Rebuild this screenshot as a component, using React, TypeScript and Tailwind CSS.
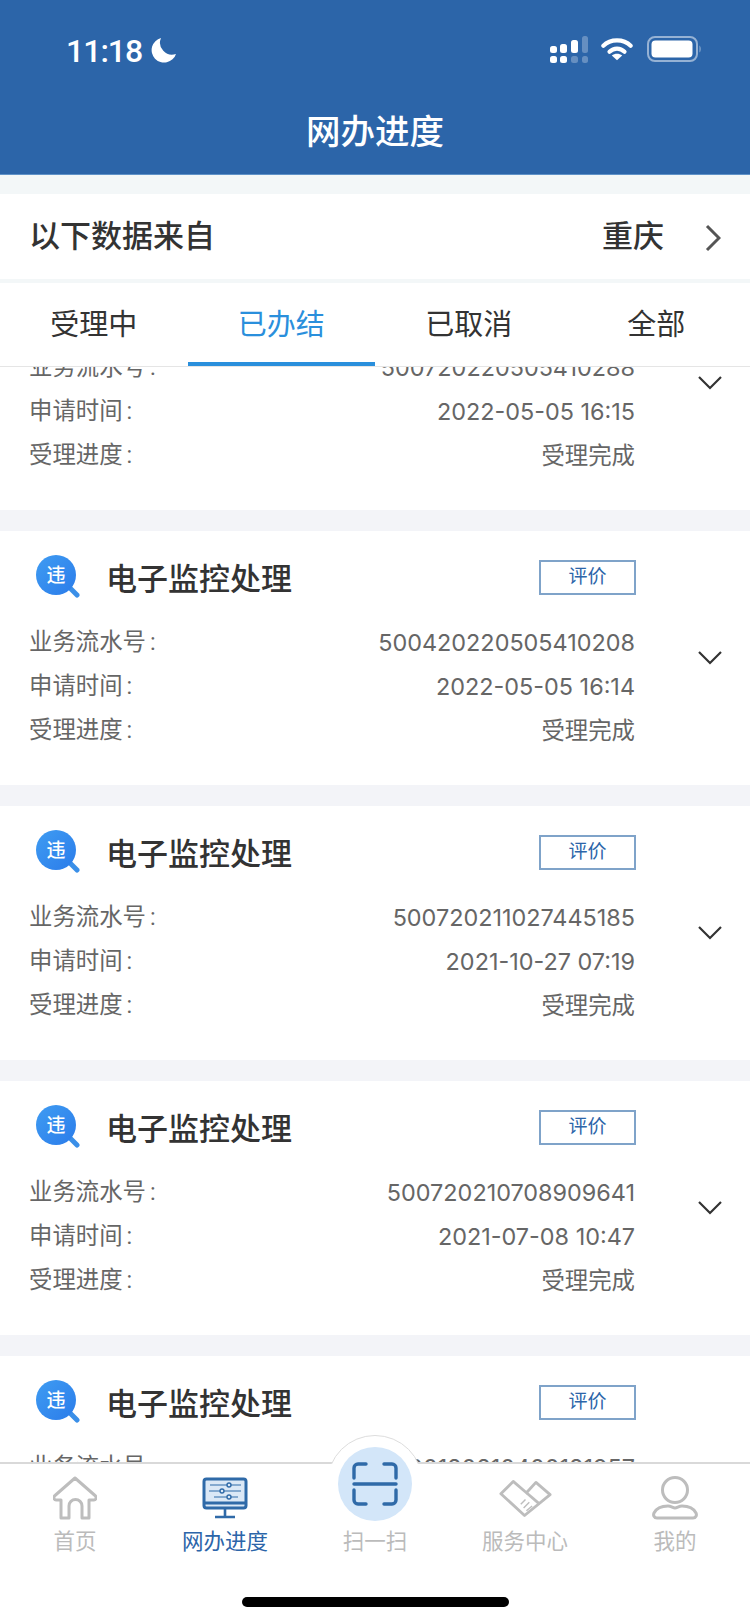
const cjk = "font-['Roboto','Noto_Sans_CJK_SC',sans-serif]";

const tabs = ['受理中', '已办结', '已取消', '全部'];

const cards = [
  { no: '500720220505410288', time: '2022-05-05 16:15' },
  { no: '500420220505410208', time: '2022-05-05 16:14' },
  { no: '500720211027445185', time: '2021-10-27 07:19' },
  { no: '500720210708909641', time: '2021-07-08 10:47' },
  { no: '500120210400181957', time: '2021-04-00 10:00' },
];

const StatusBar = () => (
  <div className="flex h-[64px] items-start pl-[66px] pr-[49px] pt-[32px]">
    <span className="text-[32px] font-medium leading-[38px] tracking-[-1px] text-white">11:18</span>
    <svg width="26" height="26" viewBox="0 0 26 26" className="ml-[9px] mt-[5px]">
      <path d="M10 1 A12.5 12.5 0 1 0 25 17 A12 12 0 0 1 10 1 Z" fill="#fff" />
    </svg>
    <div className="ml-auto mt-[4px] flex items-start">
      <svg width="40" height="28" viewBox="0 0 40 28">
        <g fill="#fff">
          <rect x="0" y="10" width="7" height="7" rx="2.5" />
          <rect x="10" y="8" width="7" height="9" rx="2.5" />
          <rect x="21" y="4" width="7" height="13" rx="2.5" />
          <rect x="0" y="20" width="7" height="7" rx="2.5" />
          <rect x="10" y="20" width="7" height="7" rx="2.5" />
        </g>
        <g fill="#fff" fillOpacity="0.28">
          <rect x="32" y="0" width="6" height="17" rx="2.5" />
          <rect x="21" y="20" width="7" height="7" rx="2.5" />
          <rect x="32" y="20" width="6" height="7" rx="2.5" />
        </g>
      </svg>
      <svg width="32" height="26" viewBox="0 0 34 26" className="ml-[11px]">
        <path d="M2.5 9.5 C10 2 24 2 31.5 9.5" fill="none" stroke="#fff" strokeWidth="4.4" strokeLinecap="round" />
        <path d="M9 16 C13.5 11.5 20.5 11.5 25 16" fill="none" stroke="#fff" strokeWidth="4.4" strokeLinecap="round" />
        <path d="M17 25 L11.5 20 C14.5 17.5 19.5 17.5 22.5 20 Z" fill="#fff" />
      </svg>
      <svg width="54" height="26" viewBox="0 0 54 26" className="ml-[14px]">
        <rect x="1" y="1" width="49" height="24" rx="7" fill="none" stroke="#fff" strokeOpacity="0.5" strokeWidth="2" />
        <rect x="4.5" y="4.5" width="41" height="17" rx="4" fill="#fff" />
        <path d="M52.5 9.5 C54 10.5 54 15.5 52.5 16.5 Z" fill="#fff" fillOpacity="0.5" />
      </svg>
    </div>
  </div>
);

const BadgeIcon = () => (
  <svg width="44" height="44" viewBox="0 0 44 44">
    <defs>
      <linearGradient id="badge" x1="0" y1="0" x2="1" y2="1">
        <stop offset="0" stopColor="#3f9cf2" />
        <stop offset="1" stopColor="#2b7cea" />
      </linearGradient>
    </defs>
    <path d="M33 32 L41 40" stroke="#3a8fe8" strokeWidth="5" strokeLinecap="round" />
    <circle cx="20" cy="20" r="20" fill="url(#badge)" />
    <text x="20" y="27" textAnchor="middle" fontSize="19" fontWeight="500" fill="#fff" fontFamily="Noto Sans CJK SC, sans-serif">违</text>
  </svg>
);

const Row = ({ label, value }: { label: string; value: string }) => (
  <div className="flex h-[44px] items-center justify-between text-[23.4px] text-[#666]">
    <span>
      {label}
      <span className="ml-[4px]">:</span>
    </span>
    <span className="font-['Inter','Noto_Sans_CJK_SC',sans-serif]">{value}</span>
  </div>
);

const Card = ({ no, time }: { no: string; time: string }) => (
  <div className="flex h-[254px] shrink-0 bg-white pl-[29px]">
    <div className="w-[606px] pt-[25px]">
      <div className="flex h-[42px] items-center">
        <div className="ml-[7px] w-[44px]">
          <BadgeIcon />
        </div>
        <span className="ml-[26px] pt-[5px] text-[31px] font-medium leading-[37px] text-[#333]">电子监控处理</span>
        <button className="ml-auto mr-[-1px] mt-[1px] flex h-[35px] w-[97px] items-center justify-center border-2 border-[#7fa3c9] text-[19px] text-[#2c65a9]">
          评价
        </button>
      </div>
      <div className="mt-[23px]">
        <Row label="业务流水号" value={no} />
        <Row label="申请时间" value={time} />
        <Row label="受理进度" value="受理完成" />
      </div>
    </div>
    <svg width="26" height="15" viewBox="0 0 26 15" fill="none" className="ml-[62px] mt-[119px] shrink-0">
      <path d="M2 2 L13 13 L24 2" stroke="#333" strokeWidth="2.2" />
    </svg>
  </div>
);

const NavItem = ({ label, active, children }: { label: string; active?: boolean; children?: React.ReactNode }) => (
  <div className="flex flex-col items-center">
    <div className="flex h-[44px] items-center justify-center">{children}</div>
    <span className={`mt-[11px] text-[21.5px] leading-[22px] ${active ? 'text-[#2c65a9]' : 'text-[#bbbbbb]'}`}>{label}</span>
  </div>
);

const BottomNav = () => (
  <div className="relative shrink-0 border-t-2 border-[#d9d9d9] bg-white">
    <div className="absolute left-[327px] top-[-29px] h-[29px] w-[96px] overflow-hidden">
      <div className="h-[96px] w-[96px] rounded-full border border-[#dddddd] bg-white" />
    </div>
    <div className="absolute left-[338px] top-[-17px] flex h-[74px] w-[74px] items-center justify-center rounded-full bg-[#d3e6f9]">
      <svg width="46" height="44" viewBox="0 0 46 44" fill="none" stroke="#2f6aa8" strokeWidth="3.4" strokeLinecap="round">
        <path d="M14 2 H6 A4 4 0 0 0 2 6 V16" />
        <path d="M32 2 H40 A4 4 0 0 1 44 6 V16" />
        <path d="M2 22 H44" />
        <path d="M2 28 V38 A4 4 0 0 0 6 42 H14" />
        <path d="M44 28 V38 A4 4 0 0 1 40 42 H32" />
      </svg>
    </div>
    <div className="grid grid-cols-5 pt-[12px]">
      <NavItem label="首页">
        <svg width="44" height="44" viewBox="12 4 44 44" fill="none" stroke="#bdbdbd" strokeWidth="3" strokeLinejoin="round">
          <path d="M20 46 V28 H15 C13 28 12 25 14 23.5 L34 6 L54 23.5 C56 25 55 28 53 28 H48 V46 H41 V34 A6.5 6.5 0 0 0 28 34 V46 Z" />
        </svg>
      </NavItem>
      <NavItem label="网办进度" active>
        <svg width="46" height="42" viewBox="0 0 46 42">
          <rect x="2" y="2" width="42" height="29" rx="2.5" fill="#dbe8f6" stroke="#2f6aa8" strokeWidth="3" />
          <path d="M2 26 H44" stroke="#2f6aa8" strokeWidth="3" />
          <path d="M23 31 V39 M13 40 H33" stroke="#2f6aa8" strokeWidth="2.6" />
          <g stroke="#2f6aa8" strokeWidth="1.2">
            <path d="M8 8 H39 M7 14 H39 M12 20 H36" />
          </g>
          <g fill="#dbe8f6" stroke="#2f6aa8" strokeWidth="1.4">
            <circle cx="27" cy="8" r="2" />
            <circle cx="20" cy="14" r="2" />
            <circle cx="27" cy="20" r="2" />
          </g>
        </svg>
      </NavItem>
      <NavItem label="扫一扫" />
      <NavItem label="服务中心">
        <svg width="53" height="40" viewBox="6 4 56 41" fill="none" stroke="#bdbdbd" strokeWidth="3" strokeLinejoin="round">
          <path d="M8 20 L21 7 L35 19 L45 8 L60 21 L33 43 Z" />
          <path d="M35 19 L49 31" />
          <path d="M29 31 L34 26 M32 35 L38 29 M35 38 L41 33" strokeWidth="1.5" />
        </svg>
      </NavItem>
      <NavItem label="我的">
        <svg width="46" height="44" viewBox="0 0 46 44" fill="none" stroke="#bdbdbd" strokeWidth="3">
          <circle cx="23" cy="14" r="12.5" />
          <path d="M5 42 H41 C44 42 45 39 44 37 C41 31 34 30 30 30 C27 30 25 32 23 32 C21 32 19 30 16 30 C12 30 5 31 2 37 C1 39 2 42 5 42 Z" strokeLinejoin="round" />
        </svg>
      </NavItem>
    </div>
    <div className="mx-auto mb-[16px] mt-[44px] h-[10px] w-[267px] rounded-full bg-black" />
  </div>
);

export default function App() {
  return (
    <div className={`flex h-[1623px] w-[750px] flex-col overflow-hidden bg-[#f3f7f8] ${cjk}`}>
      <header className="h-[175px] shrink-0 border-b border-[#5f92c8] bg-[#2c65a9]">
        <StatusBar />
        <h1 className="mt-[43px] text-center text-[34.5px] font-medium leading-[50px] text-white">网办进度</h1>
      </header>

      <div className="mt-[19px] flex h-[85px] shrink-0 items-center bg-white pl-[29px] pr-[29px] pt-[2px]">
        <span className="text-[31px] font-medium text-[#333]">以下数据来自</span>
        <span className="ml-auto text-[31px] font-medium text-[#333]">重庆</span>
        <svg width="16" height="28" viewBox="0 0 16 28" fill="none" className="ml-[41px]">
          <path d="M2 2 L14 14 L2 26" stroke="#555" strokeWidth="3" />
        </svg>
      </div>

      <div className="mt-[4px] grid h-[84px] shrink-0 grid-cols-4 border-b border-[#e5e5e5] bg-white">
        {tabs.map((t, i) => (
          <div
            key={t}
            className={`flex items-center justify-center border-b-4 pt-[6px] text-[29px] ${
              i === 1 ? 'border-[#2a8fdc] text-[#2a8fdc]' : 'border-transparent text-[#333]'
            }`}
          >
            {t}
          </div>
        ))}
      </div>

      <div className="min-h-0 flex-1 overflow-hidden bg-[#f3f4f8]">
        <div className="mt-[-111px] flex flex-col gap-[21px]">
          {cards.map((c) => (
            <Card key={c.no} no={c.no} time={c.time} />
          ))}
        </div>
      </div>

      <BottomNav />
    </div>
  );
}
